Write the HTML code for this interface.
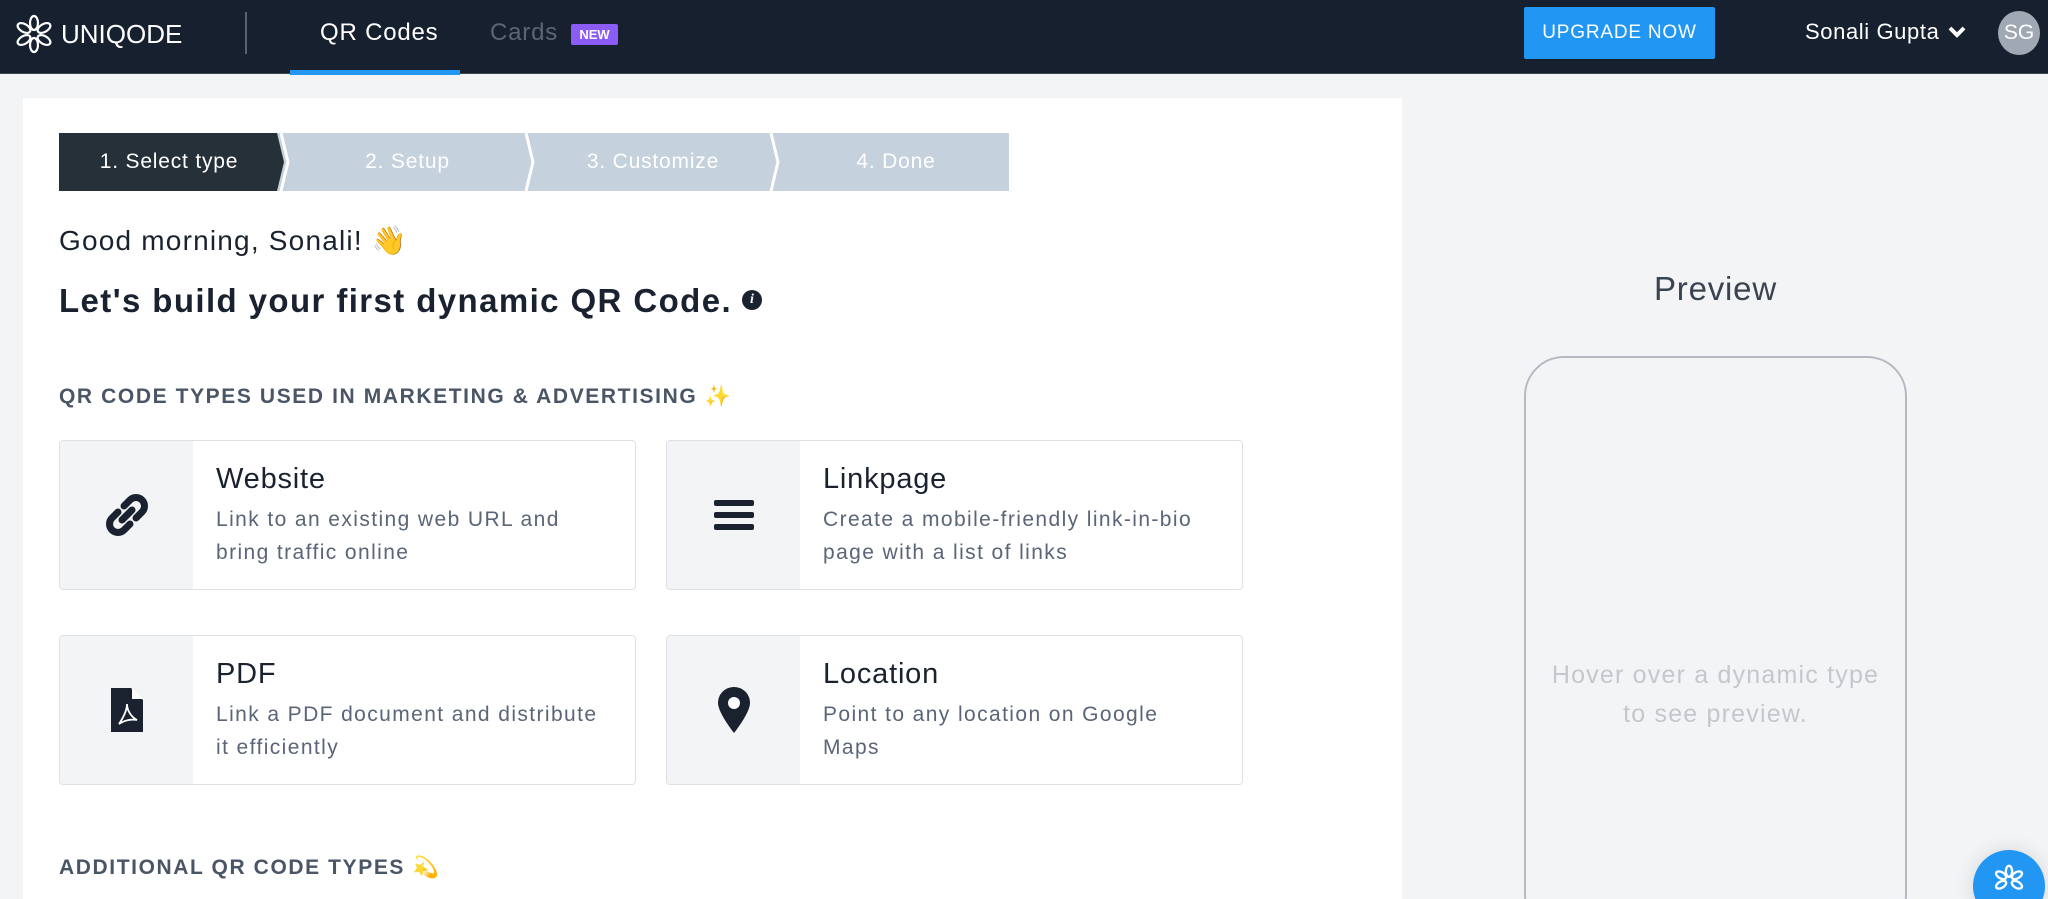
<!DOCTYPE html>
<html style="width:2048px;height:899px;overflow:hidden"><head><meta charset="utf-8"><style>
*{margin:0;padding:0;box-sizing:border-box}
body{width:2048px;height:899px;overflow:hidden;background:#f3f4f6;font-family:"Liberation Sans",sans-serif;position:relative}
.hdr{position:absolute;left:0;top:0;width:2048px;height:74px;background:#17202f;border-bottom:1px solid #3a4350}
.abs{position:absolute}
.panel{position:absolute;left:23px;top:98px;width:1379px;height:801px;background:#fff}
.step{position:absolute;top:133px;height:58px;color:#fff;font-size:21px;line-height:58px;text-align:center;letter-spacing:.8px}
.card{position:absolute;width:577px;height:150px;border:1.5px solid #dde1e6;border-radius:4px;background:#fff;overflow:hidden}
.card .ic{position:absolute;left:0;top:0;width:133px;height:100%;background:#f3f4f6;display:flex;align-items:center;justify-content:center}
.card .t{position:absolute;left:156px;top:22px;font-size:29px;color:#1a2230;letter-spacing:.8px}
.card .d{position:absolute;left:156px;top:62px;font-size:21px;line-height:33px;color:#5a6578;width:400px;letter-spacing:1.4px}
.sec{position:absolute;left:59px;font-size:21px;font-weight:bold;color:#4a5566;letter-spacing:1.6px}
</style></head><body>
<div class="hdr">
 <svg class="abs" style="left:15px;top:14px" width="38" height="40" viewBox="0 0 38 40" fill="none" stroke="#fff" stroke-width="2.2">
  <ellipse cx="19" cy="9" rx="4" ry="7"/><ellipse cx="19" cy="31" rx="4" ry="7"/>
  <ellipse cx="9" cy="14" rx="7" ry="4" transform="rotate(30 9 14)"/><ellipse cx="29" cy="14" rx="7" ry="4" transform="rotate(-30 29 14)"/>
  <ellipse cx="9" cy="26" rx="7" ry="4" transform="rotate(-30 9 26)"/><ellipse cx="29" cy="26" rx="7" ry="4" transform="rotate(30 29 26)"/>
 </svg>
 <div class="abs" style="left:61px;top:19px;color:#fff;font-size:26px;letter-spacing:0">UNIQODE</div>
 <div class="abs" style="left:245px;top:12px;width:2px;height:42px;background:#5a6270"></div>
 <div class="abs" style="left:320px;top:19px;color:#fff;font-size:24px;letter-spacing:.8px">QR Codes</div>
 <div class="abs" style="left:290px;top:70px;width:170px;height:5px;background:#2196f3"></div>
 <div class="abs" style="left:490px;top:19px;color:#5c6573;font-size:24px;letter-spacing:.8px">Cards</div>
 <div class="abs" style="left:571px;top:24px;width:47px;height:21px;background:#8b5cf6;color:#fff;font-size:13px;font-weight:bold;text-align:center;line-height:21px;border-radius:2px">NEW</div>
 <div class="abs" style="left:1524px;top:7px;width:191px;height:52px;background:#2196f3;border-radius:2px;color:#fff;font-size:19px;text-align:center;line-height:52px;letter-spacing:.8px">UPGRADE NOW</div>
 <div class="abs" style="left:1805px;top:19px;color:#fff;font-size:22px;letter-spacing:.6px">Sonali Gupta</div>
 <svg class="abs" style="left:1948px;top:25px" width="18" height="14" viewBox="0 0 18 14"><path d="M2 3l7 7 7-7" stroke="#fff" stroke-width="4" fill="none"/></svg>
 <div class="abs" style="left:1998px;top:11px;width:42px;height:44px;border-radius:50%;background:#a0a8b3;color:#fff;font-size:21px;text-align:center;line-height:44px">SG</div>
</div>
<div class="panel"></div>
<svg class="abs" style="left:59px;top:133px" width="950" height="58">
 <polygon points="0,0 220,0 226,29 220,58 0,58" fill="#263038"/>
 <polygon points="218,0 465,0 472,29 465,58 218,58 225,29" fill="#c5d1dc"/>
 <polygon points="463,0 710,0 717,29 710,58 463,58 470,29" fill="#c5d1dc"/>
 <polygon points="708,0 950,0 950,58 708,58 715,29" fill="#c5d1dc"/>
 <polyline points="222,0 229,29 222,58" stroke="#fff" stroke-width="3" fill="none"/>
 <polyline points="467,0 474,29 467,58" stroke="#fff" stroke-width="3" fill="none"/>
 <polyline points="712,0 719,29 712,58" stroke="#fff" stroke-width="3" fill="none"/>
</svg>
<div class="step" style="left:59px;width:220px">1. Select type</div>
<div class="step" style="left:290px;width:235px">2. Setup</div>
<div class="step" style="left:533px;width:240px">3. Customize</div>
<div class="step" style="left:778px;width:236px">4. Done</div>
<div class="abs" style="left:59px;top:224px;font-size:28px;color:#1a2230;letter-spacing:1.2px">Good morning, Sonali! 👋</div>
<div class="abs" style="left:59px;top:282px;font-size:33px;font-weight:bold;color:#1a2230;letter-spacing:1.4px">Let's build your first dynamic QR Code.</div>
<div class="abs" style="left:742px;top:290px;width:20px;height:20px;border-radius:50%;background:#1a2230;color:#fff;font-size:14px;font-weight:bold;font-style:italic;text-align:center;line-height:20px;font-family:'Liberation Serif',serif">i</div>
<div class="sec" style="top:385px">QR CODE TYPES USED IN MARKETING &amp; ADVERTISING ✨</div>
<div class="card" style="left:59px;top:440px"><div class="ic">
 <svg width="46" height="46" viewBox="0 0 46 46" fill="none" stroke="#1a2230" stroke-width="7" stroke-linecap="round"><path d="M20 14l6-6a8 8 0 0 1 12 12l-6 6"/><path d="M26 32l-6 6a8 8 0 0 1-12-12l6-6"/><path d="M18 28l10-10"/></svg>
</div><div class="t">Website</div><div class="d">Link to an existing web URL and bring traffic online</div></div>
<div class="card" style="left:666px;top:440px"><div class="ic">
 <svg width="40" height="34" viewBox="0 0 40 34"><rect x="0" y="2" width="40" height="6" rx="2" fill="#1a2230"/><rect x="0" y="14" width="40" height="6" rx="2" fill="#1a2230"/><rect x="0" y="26" width="40" height="6" rx="2" fill="#1a2230"/></svg>
</div><div class="t">Linkpage</div><div class="d">Create a mobile-friendly link-in-bio page with a list of links</div></div>
<div class="card" style="left:59px;top:635px"><div class="ic">
 <svg width="32" height="44" viewBox="0 0 32 44"><path d="M0 0h20l12 12v32H0z" fill="#1a2230"/><path d="M21 0v11h11" fill="#fff"/><path d="M8 36c4-6 8-14 8-20 0 8 6 14 10 16-6-1-12 0-18 4z" stroke="#fff" stroke-width="1.8" fill="none"/></svg>
</div><div class="t">PDF</div><div class="d">Link a PDF document and distribute it efficiently</div></div>
<div class="card" style="left:666px;top:635px"><div class="ic">
 <svg width="32" height="46" viewBox="0 0 32 46"><path d="M16 0C7 0 0 7 0 16c0 10 16 30 16 30s16-20 16-30C32 7 25 0 16 0z" fill="#1a2230"/><circle cx="16" cy="16" r="6" fill="#fff"/></svg>
</div><div class="t">Location</div><div class="d" style="width:350px">Point to any location on Google Maps</div></div>
<div class="sec" style="top:856px">ADDITIONAL QR CODE TYPES 💫</div>
<div class="abs" style="left:1524px;top:270px;width:383px;text-align:center;font-size:33px;color:#3a4350;letter-spacing:.8px">Preview</div>
<div class="abs" style="left:1524px;top:356px;width:383px;height:580px;border:2px solid #b5bac2;border-radius:40px"></div>
<div class="abs" style="left:1524px;top:656px;width:383px;text-align:center;font-size:25px;line-height:39px;color:#c4c7cd;letter-spacing:1.2px">Hover over a dynamic type<br>to see preview.</div>
<div class="abs" style="left:1973px;top:850px;width:72px;height:72px;border-radius:50%;background:#2196f3;box-shadow:0 0 20px rgba(0,0,0,.12)">
 <svg style="position:absolute;left:21px;top:14px" width="30" height="32" viewBox="0 0 38 40" fill="none" stroke="#fff" stroke-width="3">
  <ellipse cx="19" cy="9" rx="4" ry="7"/><ellipse cx="9" cy="14" rx="7" ry="4" transform="rotate(30 9 14)"/><ellipse cx="29" cy="14" rx="7" ry="4" transform="rotate(-30 29 14)"/><ellipse cx="9" cy="26" rx="7" ry="4" transform="rotate(-30 9 26)"/><ellipse cx="29" cy="26" rx="7" ry="4" transform="rotate(30 29 26)"/>
 </svg>
</div>
</body></html>
